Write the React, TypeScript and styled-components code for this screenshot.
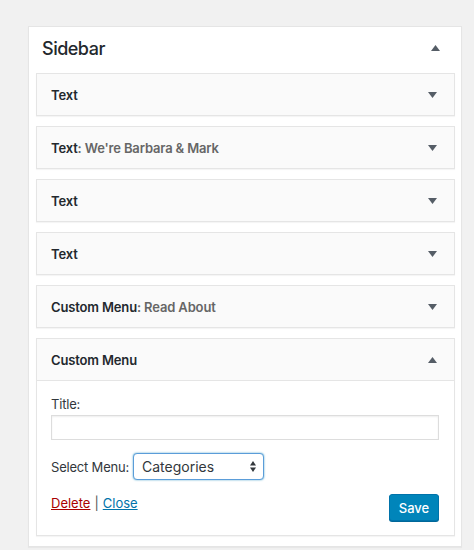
import React from 'react';
import styled, { createGlobalStyle } from 'styled-components';

const GlobalStyle = createGlobalStyle`
  html, body {
    margin: 0;
    padding: 0;
    background: #f1f1f1;
  }
  body {
    font-family: Inter, "Liberation Sans", Arial, sans-serif;
    color: #23282d;
  }
`;

type Widget = {
  name: string;
  title?: string;
};

const widgets: Widget[] = [
  { name: 'Text' },
  { name: 'Text', title: "We're Barbara & Mark" },
  { name: 'Text' },
  { name: 'Text' },
  { name: 'Custom Menu', title: 'Read About' }
];

const Arrow: React.FC<{ up?: boolean }> = ({ up }) => (
  <ArrowIcon width="9" height="6" viewBox="0 0 9 6">
    {up ? <polygon points="0,6 9,6 4.5,0" /> : <polygon points="0,0 9,0 4.5,6" />}
  </ArrowIcon>
);

const App: React.FC = () => {
  return (
    <Page>
      <GlobalStyle />
      <Panel>
        <PanelHeader>
          <PanelTitle>Sidebar</PanelTitle>
          <Arrow up />
        </PanelHeader>
        <WidgetList>
          {widgets.map((w, index) => (
            <WidgetBox key={index}>
              <WidgetTop>
                <WidgetName>
                  {w.name}
                  {w.title && <InTitle>: {w.title}</InTitle>}
                </WidgetName>
                <Arrow />
              </WidgetTop>
            </WidgetBox>
          ))}
          <WidgetBox>
            <WidgetTop open>
              <WidgetName>Custom Menu</WidgetName>
              <Arrow up />
            </WidgetTop>
            <WidgetBody>
              <Label>Title:</Label>
              <TextInput type="text" />
              <SelectRow>
                <Label>Select Menu:</Label>
                <SelectWrap>
                  <Select defaultValue="categories">
                    <option value="categories">Categories</option>
                    <option value="read">Read About</option>
                  </Select>
                  <SelectArrows width="6" height="11" viewBox="0 0 6 11">
                    <polygon points="0,4.5 6,4.5 3,0" />
                    <polygon points="0,6.5 6,6.5 3,11" />
                  </SelectArrows>
                </SelectWrap>
              </SelectRow>
              <Actions>
                <Links>
                  <DeleteLink href="#">Delete</DeleteLink>
                  <Sep>|</Sep>
                  <CloseLink href="#">Close</CloseLink>
                </Links>
                <SaveButton>Save</SaveButton>
              </Actions>
            </WidgetBody>
          </WidgetBox>
        </WidgetList>
      </Panel>
    </Page>
  );
};

export default App;

const Page = styled.div`
  padding: 26px 12px 4px 28px;
`;

const Panel = styled.div`
  width: 432px;
  background: #fff;
  border: 1px solid #e5e5e5;
  box-shadow: 0 1px 1px rgba(0, 0, 0, 0.04);
  padding-bottom: 10px;
`;

const PanelHeader = styled.div`
  height: 46px;
  display: flex;
  align-items: center;
  justify-content: space-between;
  padding: 0 21px 4px 13px;
  box-sizing: border-box;
`;

const PanelTitle = styled.h2`
  margin: 0;
  font-size: 18px;
  font-weight: 500;
  letter-spacing: -0.5px;
  color: #23282d;
`;

const ArrowIcon = styled.svg`
  fill: #555d66;
  flex-shrink: 0;
`;

const WidgetList = styled.div`
  display: flex;
  flex-direction: column;
  gap: 10px;
  padding: 0 6px 0 7px;
`;

const WidgetBox = styled.div`
  border: 1px solid #e5e5e5;
  background: #fafafa;
  box-shadow: 0 1px 1px rgba(0, 0, 0, 0.04);
`;

const WidgetTop = styled.div<{ open?: boolean }>`
  height: 41px;
  display: flex;
  align-items: center;
  justify-content: space-between;
  padding: 0 17px 0 14px;
  border-bottom: ${(p) => (p.open ? '1px solid #e5e5e5' : 'none')};
`;

const WidgetName = styled.h3`
  margin: 0;
  font-size: 13px;
  font-weight: 600;
  letter-spacing: -0.15px;
  color: #23282d;
`;

const InTitle = styled.span`
  font-weight: 600;
  color: #666;
`;

const WidgetBody = styled.div`
  background: #fff;
  padding: 14px 15px 14px 14px;
  display: flex;
  flex-direction: column;
`;

const Label = styled.label`
  font-size: 13px;
  line-height: 18px;
  letter-spacing: -0.2px;
  color: #32373c;
  white-space: nowrap;
`;

const TextInput = styled.input`
  margin-top: 2px;
  height: 25px;
  box-sizing: border-box;
  border: 1px solid #ddd;
  box-shadow: inset 0 1px 2px rgba(0, 0, 0, 0.07);
  outline: none;
  width: 100%;
`;

const SelectRow = styled.div`
  margin-top: 13px;
  display: flex;
  align-items: center;
  gap: 4px;
`;

const SelectWrap = styled.div`
  position: relative;
  width: 131px;
`;

const Select = styled.select`
  appearance: none;
  -webkit-appearance: none;
  width: 100%;
  height: 27px;
  box-sizing: border-box;
  padding: 0 20px 0 8px;
  font-family: Inter, "Liberation Sans", Arial, sans-serif;
  font-size: 14px;
  color: #32373c;
  background: #fff;
  border: 1px solid #5b9dd9;
  border-radius: 4px;
  box-shadow: 0 0 2px rgba(30, 140, 190, 0.8);
  outline: none;
`;

const SelectArrows = styled.svg`
  position: absolute;
  right: 8px;
  top: 8px;
  fill: #32373c;
  pointer-events: none;
`;

const Actions = styled.div`
  margin-top: 14px;
  display: flex;
  justify-content: space-between;
  align-items: flex-start;
`;

const Links = styled.div`
  font-size: 13px;
  line-height: 18px;
`;

const DeleteLink = styled.a`
  color: #a00;
  text-decoration: underline;
`;

const CloseLink = styled.a`
  color: #0073aa;
  text-decoration: underline;
`;

const Sep = styled.span`
  color: #555;
  margin: 0 4px;
`;

const SaveButton = styled.button`
  width: 50px;
  height: 27px;
  font-family: Inter, "Liberation Sans", Arial, sans-serif;
  font-size: 13px;
  font-weight: 500;
  color: #fff;
  background: #0085ba;
  border: 1px solid #0073aa;
  border-radius: 3px;
  box-shadow: 0 1px 0 #006799;
  padding: 0;
  cursor: pointer;
`;
